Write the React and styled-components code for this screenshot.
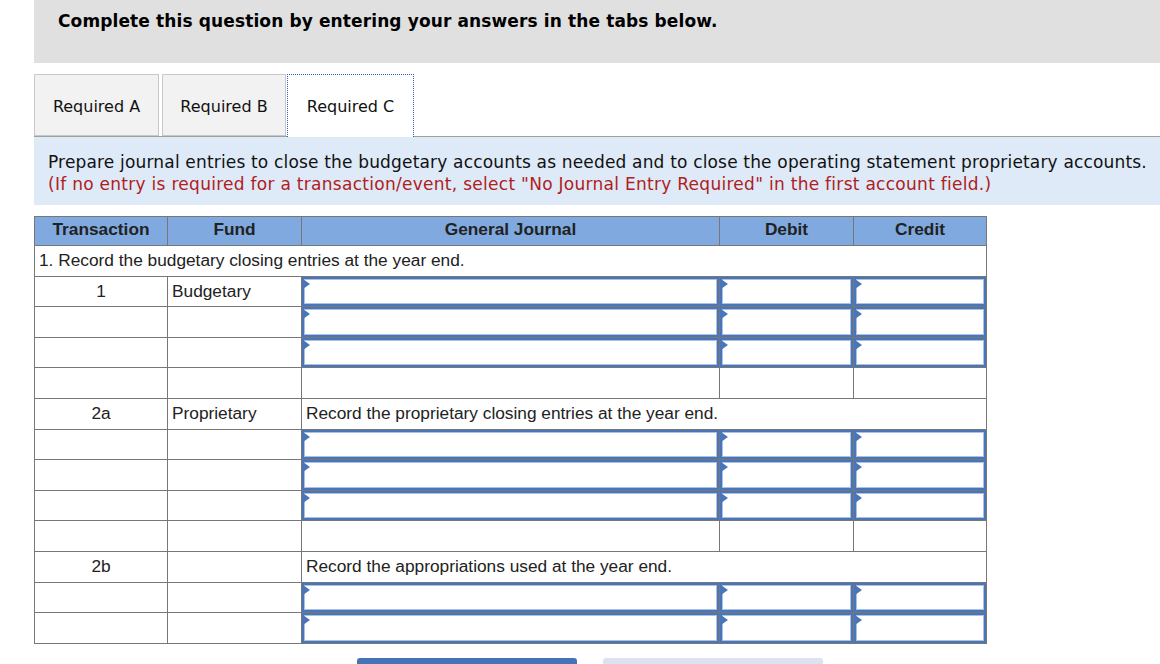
import styled, { createGlobalStyle } from "styled-components";

const GlobalStyle = createGlobalStyle`
    body {
        margin: 0;
        background: #fff;
        font-family: "DejaVu Sans", Verdana, sans-serif;
        overflow: hidden;
    }
`;

const Page = styled.div`
    padding-left: 34px;
    width: 1126px;
`;

const TopBand = styled.div`
    background: #e0e0e0;
    height: 63px;
    box-sizing: border-box;
    padding: 11px 0 0 24px;
    font-weight: bold;
    font-size: 17px;
    letter-spacing: 0.12px;
    color: #000;
`;

const TabBar = styled.div`
    display: flex;
    align-items: flex-end;
    margin-top: 11px;
    border-bottom: 1px solid #a0a0a0;
    height: 62px;
`;

const Tab = styled.div`
    box-sizing: border-box;
    width: ${(p) => p.w}px;
    margin-right: ${(p) => p.gap}px;
    display: flex;
    align-items: center;
    justify-content: center;
    padding-top: ${(p) => (p.active ? "1px" : "3px")};
    font-size: 16px;
    color: #111;
    background: ${(p) => (p.active ? "#fff" : "#f2f2f2")};
    border: ${(p) => (p.active ? "1px dotted #2f63b0" : "1px solid #c8c8c8")};
    border-bottom: ${(p) => (p.active ? "none" : "1px solid #c8c8c8")};
    margin-bottom: ${(p) => (p.active ? "-1px" : "0")};
    height: ${(p) => (p.active ? "63px" : "62px")};
`;

const Instructions = styled.div`
    background: #deeaf7;
    height: 68px;
    box-sizing: border-box;
    padding: 14px 0 0 14px;
    font-size: 17px;
    letter-spacing: 0.17px;
    line-height: 22px;
    color: #111;
    .note {
        color: #b02020;
        letter-spacing: 0.28px;
    }
`;

const Journal = styled.table`
    margin-top: 11px;
    border-collapse: collapse;
    table-layout: fixed;
    width: 952px;
    font-family: "Liberation Sans", Arial, sans-serif;
    font-size: 17.3px;
    color: #222;
    th {
        background: #80a9df;
        font-weight: bold;
        height: 29px;
        box-sizing: border-box;
        border: 1px solid #777;
        padding: 0 0 3px;
    }
    td {
        border: 1px solid #777;
        height: 30.6px;
        padding: 0 4px;
        box-sizing: border-box;
    }
    td.center {
        text-align: center;
    }
    td.field {
        padding: 0;
        position: relative;
    }
`;

const Entry = styled.div`
    position: absolute;
    inset: 0;
    background: #fff;
    border: 2px solid #4a76b8;
    box-shadow: inset 0 0 0 1px #a9c1e6;
    &::before {
        content: "";
        position: absolute;
        left: -1px;
        top: 0;
        border-left: 7px solid #4a76b8;
        border-top: 5px solid transparent;
        border-bottom: 5px solid transparent;
    }
`;

const Buttons = styled.div`
    display: flex;
    gap: 26px;
    margin: 14px 0 0 323px;
`;

const Button = styled.div`
    width: 220px;
    height: 20px;
    border-radius: 3px 3px 0 0;
    background: ${(p) => (p.primary ? "#4574b6" : "#dae3ef")};
`;

const widths = [133, 134, 418, 134, 133];

function FieldRow({ tx = "", fund = "" }) {
    return (
        <tr>
            <td className="center">{tx}</td>
            <td>{fund}</td>
            <td className="field"><Entry /></td>
            <td className="field"><Entry /></td>
            <td className="field"><Entry /></td>
        </tr>
    );
}

function BlankRow() {
    return (
        <tr>
            <td></td>
            <td></td>
            <td></td>
            <td></td>
            <td></td>
        </tr>
    );
}

function LabelRow({ tx, fund = "", text }) {
    return (
        <tr>
            <td className="center">{tx}</td>
            <td>{fund}</td>
            <td colSpan={3}>{text}</td>
        </tr>
    );
}

export default function App() {
    return (
        <Page>
            <GlobalStyle />
            <TopBand>Complete this question by entering your answers in the tabs below.</TopBand>
            <TabBar>
                <Tab w={125} gap={3}>Required A</Tab>
                <Tab w={124} gap={1}>Required B</Tab>
                <Tab w={127} gap={0} active>Required C</Tab>
            </TabBar>
            <Instructions>
                <div>
                    Prepare journal entries to close the budgetary accounts as needed and to close the operating
                    statement proprietary accounts.
                </div>
                <div className="note">
                    (If no entry is required for a transaction/event, select "No Journal Entry Required" in the first
                    account field.)
                </div>
            </Instructions>
            <Journal>
                <colgroup>
                    {widths.map((w, i) => (
                        <col key={i} style={{ width: w }} />
                    ))}
                </colgroup>
                <thead>
                    <tr>
                        <th>Transaction</th>
                        <th>Fund</th>
                        <th>General Journal</th>
                        <th>Debit</th>
                        <th>Credit</th>
                    </tr>
                </thead>
                <tbody>
                    <tr>
                        <td colSpan={5}>1. Record the budgetary closing entries at the year end.</td>
                    </tr>
                    <FieldRow tx="1" fund="Budgetary" />
                    <FieldRow />
                    <FieldRow />
                    <BlankRow />
                    <LabelRow tx="2a" fund="Proprietary" text="Record the proprietary closing entries at the year end." />
                    <FieldRow />
                    <FieldRow />
                    <FieldRow />
                    <BlankRow />
                    <LabelRow tx="2b" text="Record the appropriations used at the year end." />
                    <FieldRow />
                    <FieldRow />
                </tbody>
            </Journal>
            <Buttons>
                <Button primary />
                <Button />
            </Buttons>
        </Page>
    );
}
